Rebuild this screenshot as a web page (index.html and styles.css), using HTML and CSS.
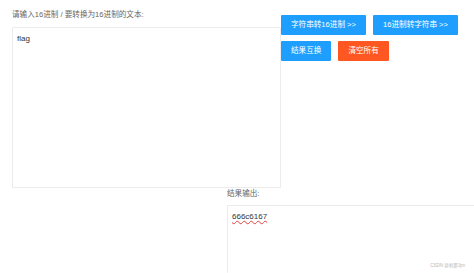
FILE: index.html
```html
<!DOCTYPE html>
<html lang="zh-CN">

<head>
    <meta charset="UTF-8">
    <meta name="viewport" content="width=device-width, initial-scale=1.0">
    <title>16进制转换</title>
    <link rel="stylesheet" href="styles.css">
</head>

<body>
    <div class="page">
        <div class="top-row">
            <div class="input-box">
                <label for="source" class="field-label">请输入16进制 / 要转换为16进制的文本:</label>
                <textarea id="source" class="field-text source-text" spellcheck="false">flag</textarea>
            </div>
            <div class="btn-group">
                <div class="btn-row">
                    <button class="btn">字符串转16进制 &gt;&gt;</button>
                    <button class="btn">16进制转字符串 &gt;&gt;</button>
                </div>
                <div class="btn-row">
                    <button class="btn">结果互换</button>
                    <button class="btn btn-danger">清空所有</button>
                </div>
            </div>
        </div>

        <div class="result-box">
            <label for="result" class="field-label result-label">结果输出:</label>
            <textarea id="result" class="field-text result-text" spellcheck="false">666c6167</textarea>
        </div>

        <div class="watermark">CSDN @刹那Jpn</div>
    </div>
</body>

</html>
```

FILE: styles.css
```css
html,
body {
    margin: 0;
    height: 273px;
    overflow: hidden;
    background: #fff;
}

body {
    font-family: "Liberation Sans", "Noto Sans CJK SC", sans-serif;
    color: #333;
}

.page {
    position: relative;
    height: 273px;
    padding: 9px 0 0 12px;
    box-sizing: border-box;
    overflow: hidden;
}

.top-row {
    display: flex;
    align-items: flex-start;
}

.input-box {
    width: 269px;
}

.field-label {
    display: block;
    font-size: 7.6px;
    line-height: 12px;
    color: #666;
    margin-bottom: 6px;
}

.field-text {
    display: block;
    box-sizing: border-box;
    border: 1px solid #ececec;
    border-radius: 1px;
    padding: 5px 4px;
    font-family: "Liberation Sans", "Noto Sans CJK SC", sans-serif;
    font-size: 8px;
    line-height: 11px;
    color: #333;
    resize: none;
    outline: none;
    margin: 0;
}

.source-text {
    width: 269px;
    height: 161px;
}

.btn-group {
    padding-top: 6px;
}

.btn-row {
    display: flex;
    gap: 7px;
    margin-bottom: 6px;
}

.btn {
    height: 20px;
    padding: 0 10px;
    border: none;
    border-radius: 1px;
    background-color: #1e9fff;
    color: #fff;
    font-family: "Liberation Sans", "Noto Sans CJK SC", sans-serif;
    font-size: 7.6px;
    line-height: 20px;
    white-space: nowrap;
    cursor: pointer;
}

.btn-danger {
    background-color: #ff5722;
}

.result-box {
    margin-left: 215px;
}

.result-label {
    margin-bottom: 5px;
}

.result-text {
    width: 270px;
    height: 68px;
    border-bottom: none;
    text-decoration: underline wavy #e04040;
    text-decoration-thickness: 0.5px;
    text-underline-offset: 1px;
}

.watermark {
    position: absolute;
    right: 9px;
    bottom: 5px;
    font-size: 4.5px;
    color: #b8b8b8;
}
```
